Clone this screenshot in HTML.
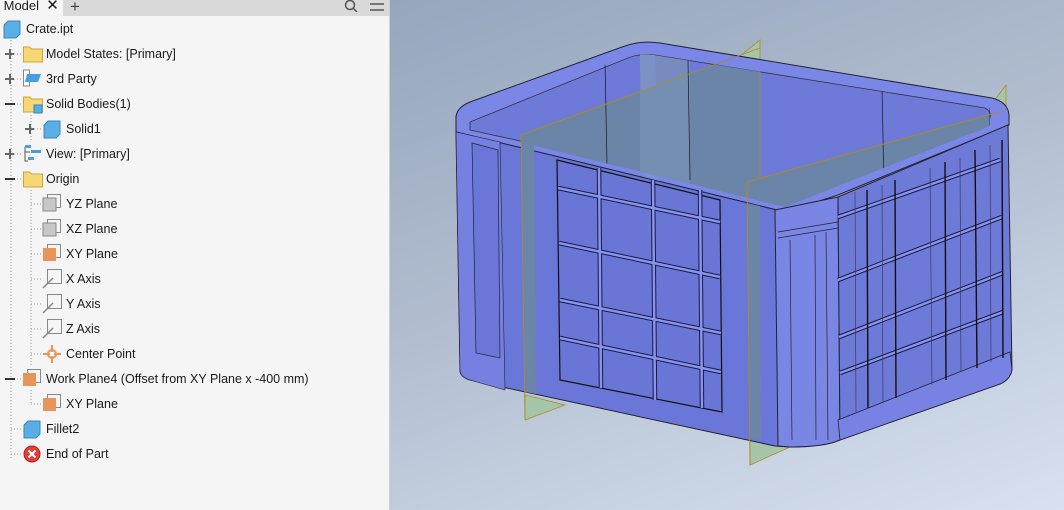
<!DOCTYPE html>
<html><head><style>
body{margin:0;width:1064px;height:510px;overflow:hidden;font-family:"Liberation Sans",sans-serif;font-size:12.5px;color:#1a1a1a;position:relative;background:#f5f5f5}
#panel{position:absolute;left:0;top:0;width:389px;height:510px;background:#f5f5f5;border-right:1px solid #cfcfcf}
#hdr{position:absolute;left:0;top:0;width:389px;height:16px;background:#d9d9d9}
#tab{position:absolute;left:0;top:0;width:63px;height:16px;background:#f5f5f5;font-size:13px;line-height:12px}
.r{position:absolute;height:20px;line-height:20px;white-space:nowrap}
#vp{position:absolute;left:390px;top:0;width:674px;height:510px;background:linear-gradient(160deg,#97a6bd 0%,#b1bdcf 45%,#d7e1f0 100%)}
</style></head><body>
<div id="panel">
<div id="hdr"><div id="tab">&nbsp;Model&nbsp; <span style="font-size:15px">✕</span></div>
<span style="position:absolute;left:70px;top:-3px;font-size:17px;color:#444">+</span>
<svg style="position:absolute;left:344px;top:0" width="14" height="12"><circle cx="6" cy="5" r="4.5" fill="none" stroke="#555" stroke-width="1.5"/><line x1="9" y1="8" x2="13" y2="12" stroke="#555" stroke-width="1.5"/></svg>
<svg style="position:absolute;left:370px;top:2px" width="14" height="10"><path d="M0 2h14M0 8h14" stroke="#555" stroke-width="1.5"/></svg>
</div>
<svg style="position:absolute;left:0;top:0" width="389" height="510">
<g stroke="#999" stroke-dasharray="1,2" fill="none">
<path d="M11 40V460M31 115V140M31 190V365M31 390V405M11 54H22M11 79H22M11 104H22M11 154H22M11 179H22M11 379H22M11 429H22M11 454H22M31 129H42M31 204H42M31 229H42M31 254H42M31 279H42M31 304H42M31 329H42M31 354H42M31 404H42"/>
</g>
<g fill="#666"><rect x="5" y="53" width="9" height="2"/><rect x="9" y="49" width="2" height="10"/><rect x="5" y="78" width="9" height="2"/><rect x="9" y="74" width="2" height="10"/><rect x="5" y="153" width="9" height="2"/><rect x="9" y="149" width="2" height="10"/><rect x="25" y="128" width="9" height="2"/><rect x="29" y="124" width="2" height="10"/></g>
<g fill="#333"><rect x="5" y="103" width="10" height="2"/><rect x="5" y="178" width="10" height="2"/><rect x="5" y="378" width="10" height="2"/></g>
<path d="M4 25l4-4h12v13l-4 4H4z" fill="#5aaee6" stroke="#3a86c0"/>
<path d="M44 125l4-4h12v13l-4 4H44z" fill="#5aaee6" stroke="#3a86c0"/>
<path d="M24 425l4-4h12v13l-4 4H24z" fill="#5aaee6" stroke="#3a86c0"/>
<path d="M23.5 47h6l2 2h11v13h-19z" fill="#f7d674" stroke="#c9a640"/>
<path d="M23.5 97h6l2 2h11v13h-19z" fill="#f7d674" stroke="#c9a640"/><rect x="34" y="105" width="8" height="8" fill="#5aaee6" stroke="#3a86c0"/>
<path d="M23.5 172h6l2 2h11v13h-19z" fill="#f7d674" stroke="#c9a640"/>
<rect x="23.5" y="70" width="6" height="16" fill="#fff" stroke="#888"/><path d="M27 74h14l-3 8H25z" fill="#4a9ede"/>
<path d="M25 147v14h3M25 152h5" stroke="#555" fill="none"/><rect x="25" y="145" width="6" height="3" fill="#4a9ede"/><rect x="31" y="150" width="10" height="3" fill="#4a9ede"/><rect x="28" y="157" width="6" height="3" fill="#4a9ede"/>
<g stroke="#888" fill="none"><rect x="47.5" y="194.5" width="13" height="13"/><rect x="47.5" y="219.5" width="13" height="13"/><rect x="47.5" y="244.5" width="13" height="13"/><rect x="27.5" y="369.5" width="13" height="13"/><rect x="47.5" y="394.5" width="13" height="13"/><rect x="47.5" y="269.5" width="14" height="14"/><rect x="47.5" y="294.5" width="14" height="14"/><rect x="47.5" y="319.5" width="14" height="14"/></g>
<rect x="43" y="198" width="13" height="13" fill="#c8c8c8" stroke="#888"/><rect x="43" y="223" width="13" height="13" fill="#c8c8c8" stroke="#888"/>
<rect x="43" y="248" width="13" height="13" fill="#e8955a"/><rect x="23" y="373" width="13" height="13" fill="#e8955a"/><rect x="43" y="398" width="13" height="13" fill="#e8955a"/>
<g stroke="#888" stroke-width="1.5"><path d="M43 288l10-10M43 313l10-10M43 338l10-10"/></g>
<g fill="#e8955a"><circle cx="52" cy="354" r="4" fill="none" stroke="#e8955a" stroke-width="2"/><rect x="51" y="345" width="2" height="18"/><rect x="43" y="353" width="18" height="2"/></g>
<circle cx="52" cy="354" r="2" fill="#fff"/>
<circle cx="32" cy="454" r="8" fill="#e0403a" stroke="#b02020"/><path d="M28.5 450.5l7 7M35.5 450.5l-7 7" stroke="#fff" stroke-width="2"/>
</svg>
<div class="r" style="left:26px;top:19px">Crate.ipt</div>
<div class="r" style="left:46px;top:44px">Model States: [Primary]</div>
<div class="r" style="left:46px;top:69px">3rd Party</div>
<div class="r" style="left:46px;top:94px">Solid Bodies(1)</div>
<div class="r" style="left:66px;top:119px">Solid1</div>
<div class="r" style="left:46px;top:144px">View: [Primary]</div>
<div class="r" style="left:46px;top:169px">Origin</div>
<div class="r" style="left:66px;top:194px">YZ Plane</div>
<div class="r" style="left:66px;top:219px">XZ Plane</div>
<div class="r" style="left:66px;top:244px">XY Plane</div>
<div class="r" style="left:66px;top:269px">X Axis</div>
<div class="r" style="left:66px;top:294px">Y Axis</div>
<div class="r" style="left:66px;top:319px">Z Axis</div>
<div class="r" style="left:66px;top:344px">Center Point</div>
<div class="r" style="left:46px;top:369px">Work Plane4 (Offset from XY Plane x -400 mm)</div>
<div class="r" style="left:66px;top:394px">XY Plane</div>
<div class="r" style="left:46px;top:419px">Fillet2</div>
<div class="r" style="left:46px;top:444px">End of Part</div>
</div>
<div id="vp"></div>
<svg style="position:absolute;left:0;top:0" width="1064" height="510">
<defs>
<clipPath id="inner"><path d="M470 122 L635 52 L990 108 L990 126 L785 207 L470 130Z"/></clipPath>
</defs>
<!-- plane tails -->
<polygon points="525,395 565,405 525,420" fill="#a6c6aa" stroke="#b08a20" stroke-width="0.8"/>
<polygon points="750,440 790,447 750,465" fill="#a6c6aa" stroke="#b08a20" stroke-width="0.8"/>
<polygon points="735,60 760,40 760,70" fill="#a6c6aa" stroke="#b08a20" stroke-width="0.8"/>
<polygon points="980,120 1006,85 1006,128" fill="#a6c6aa" stroke="#b08a20" stroke-width="0.8"/>
<!-- rim -->
<path d="M456 120 Q455 108 470 102 L622 47 Q640 40 660 43 L992 98 Q1008 102 1009 115 L1009 125 L838 195 L785 212 L456 132Z" fill="#7b87e6" stroke="#223" stroke-width="1"/>
<!-- interior -->
<path d="M470 122 L628 58 Q640 53 655 55 L985 108 Q994 113 988 122 L790 200 L470 130Z" fill="#6e7ad8" stroke="#334" stroke-width="0.8"/>
<path d="M640 55 L655 55 L660 195 L645 195Z" fill="#7d8ee0"/>
<g clip-path="url(#inner)">
<polygon points="521,135 760,48 760,330 525,420" fill="#6a85a8" stroke="#b08a20" stroke-width="0.8"/>
<polygon points="747,182 1006,110 1006,390 750,465" fill="#6a85a8" stroke="#b08a20" stroke-width="0.8"/>
<rect x="640" y="50" width="50" height="160" fill="#7a93b8" opacity="0.7"/>
<path d="M605 60 L607 165M688 60 L690 180M882 85 L884 190M990 100 L990 125" stroke="#223" stroke-width="0.8"/>
</g>
<path d="M521 135 L760 48M747 182 L1006 110" stroke="#b08a20" stroke-width="0.8"/>
<!-- front face -->
<path d="M456 132 L785 212 L790 447 L775 446 L470 380 Q460 377 460 370Z" fill="#6b77d8" stroke="#223" stroke-width="1"/>
<path d="M456 132 L500 142 L505 390 L470 380 Q460 377 460 370Z" fill="#7580e0" stroke="#223" stroke-width="0.6"/>
<path d="M472 143 L498 150 L500 358 L476 353Z" fill="#6b77d8" stroke="#223" stroke-width="0.7"/>
<!-- plane strips on front -->
<path d="M521 139 L534 142 L536 394 L525 392Z" fill="#6a85a8"/>
<path d="M747 203 L760 206 L761 440 L750 438Z" fill="#6a85a8"/>
<path d="M521 135 L525 420M747 182 L750 465" stroke="#b08a20" stroke-width="0.8"/>
<!-- front grid panel -->
<path d="M557 160 L720 200 L722 412 L560 380Z" fill="#6a76d6" stroke="#111" stroke-width="1.2"/>
<g stroke="#1a1a40" stroke-width="4.5" fill="none">
<path d="M558 188 L720 222M559 243 L720 277M560 300 L721 333M560 338 L721 372"/>
<path d="M599 168 L601 388M653 180 L655 400M700 190 L702 408"/>
</g>
<g stroke="#8693ef" stroke-width="2.5" fill="none">
<path d="M558 188 L720 222M559 243 L720 277M560 300 L721 333M560 338 L721 372"/>
<path d="M599 168 L601 388M653 180 L655 400M700 190 L702 408"/>
</g>
<!-- corner post -->
<path d="M775 210 L838 197 L840 440 Q825 447 790 447 L778 446Z" fill="#7a86e4" stroke="#223" stroke-width="1"/>
<path d="M778 232 L838 222M778 238 L838 228M790 240 L792 440M826 232 L828 440M815 235 L816 440" stroke="#223" stroke-width="0.7" fill="none"/>
<!-- right face -->
<path d="M838 197 L1008 125 L1012 370 Q1010 380 1000 384 L840 440Z" fill="#6e7ad8" stroke="#223" stroke-width="1"/>
<path d="M838 420 L1010 352 L1012 370 Q1010 380 1000 384 L840 440Z" fill="#7782e2" stroke="#223" stroke-width="0.8"/>
<g stroke="#1a1a40" stroke-width="4.5" fill="none">
<path d="M838 217 L1000 160M838 280 L1002 217M839 337 L1003 273M840 373 L1003 312"/>
</g>
<g stroke="#8693ef" stroke-width="2.5" fill="none">
<path d="M838 217 L1000 160M838 280 L1002 217M839 337 L1003 273M840 373 L1003 312"/>
</g>
<g stroke="#111" stroke-width="1.4" fill="none">
<path d="M867 190 L868 408M895 180 L896 398M945 162 L946 380M975 150 L977 368M1002 140 L1003 358"/>
</g>
<g stroke="#334" stroke-width="0.6" fill="none">
<path d="M855 192 L856 412M882 185 L883 402M930 168 L932 385M960 158 L961 372M990 145 L991 362"/>
</g>
</svg>
</body></html>
